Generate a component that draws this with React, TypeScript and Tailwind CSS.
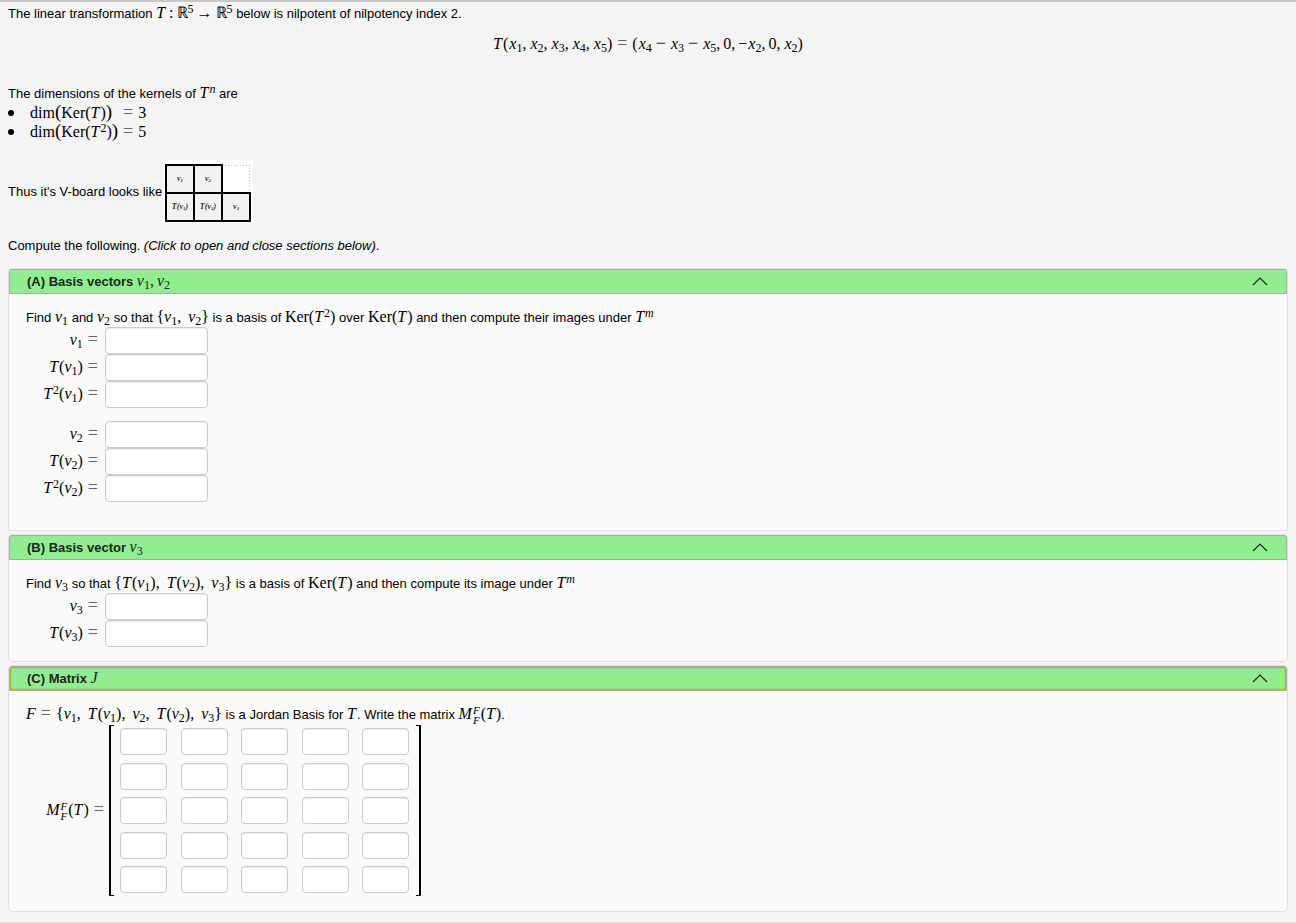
import React, { useState } from 'react'

interface Children {
  children: React.ReactNode
}

const M = ({ children }: Children) => (
  <span className="whitespace-nowrap font-['Liberation_Serif',serif] text-[16px] leading-[0] font-normal [&_sub]:-bottom-[3px] [&_sub]:text-[12px] [&_sup]:-top-[5px] [&_sup]:text-[12px]">
    {children}
  </span>
)

const Eq = () => <span className="mx-[5px] text-[18px] text-[#666]">=</span>
const EndEq = () => <span className="ml-[5px] text-[18px] text-[#666]">=</span>
const Op = () => <span className="mx-1 text-[18px] text-[#333]">−</span>
const Big = ({ children }: Children) => <span className="text-[19px]">{children}</span>
const T = () => <i className="mr-px">T</i>

// variable with a subscript, e.g. v_1
const V = ({ n }: { n: number }) => (
  <>
    <i>v</i>
    <sub>{n}</sub>
  </>
)

const X = ({ n }: { n: number }) => (
  <>
    <i className="ml-px">x</i>
    <sub>{n}</sub>
  </>
)

const Comma = () => <span className="mr-[3px]">,</span>
const WideComma = () => <span className="mr-[7px]">,</span>

const TV = ({ n }: { n: number }) => (
  <>
    <T />(<V n={n} />)
  </>
)

const T2V = ({ n }: { n: number }) => (
  <>
    <T />
    <sup>2</sup>(<V n={n} />)
  </>
)

const MatrixName = () => (
  <>
    <i>M</i>
    <span className="-my-1 mx-px inline-flex flex-col align-middle text-[11px] leading-[10px] italic">
      <span>F</span>
      <span>F</span>
    </span>
    (<T />)
  </>
)

const inputStyle =
  'h-[27px] rounded-[4px] border border-[#ccc] bg-white px-1 shadow-[inset_0_1px_1px_rgba(0,0,0,0.075)] outline-none focus:border-[#66afe9]'

const Answer = ({ id, children }: Children & { id: string }) => (
  <div className="flex items-center">
    <label htmlFor={id} className="w-[72px] text-right">
      <M>
        {children}
        <EndEq />
      </M>
    </label>
    <input id={id} type="text" className={`${inputStyle} ml-[7px] w-[103px]`} />
  </div>
)

interface SectionProps extends Children {
  title: React.ReactNode
  active?: boolean
  bottom: string
}

const Section = ({ title, active, bottom, children }: SectionProps) => {
  const [open, setOpen] = useState(true)
  return (
    <section className="mb-[3px] rounded-[4px] border border-[#e1e1e1] bg-[#fafafa]">
      <button
        type="button"
        aria-expanded={open}
        onClick={() => setOpen(!open)}
        className={`flex h-[25px] w-full items-center justify-between rounded-t-[3px] border border-[#aaa] bg-[#90ee90] pr-[18px] pl-[17px] text-left font-bold text-[#222] ${
          active ? 'shadow-[inset_0_0_0_1px_#a4be32,inset_0_0_2px_1px_#a4be32]' : ''
        }`}
      >
        <span>{title}</span>
        <svg width="16" height="9" viewBox="0 0 16 9" fill="none" stroke="#222" strokeWidth="1.2">
          <path d="M1 8 L8 1 L15 8" />
        </svg>
      </button>
      {open && <div className={`pt-[15px] pl-[17px] ${bottom}`}>{children}</div>}
    </section>
  )
}

const VBoard = () => (
  <svg
    width="90"
    height="63"
    viewBox="0 0 90 63"
    fontFamily="Liberation Serif, serif"
    fontSize="8"
    fontStyle="italic"
    fontWeight="bold"
    fill="#333"
    textAnchor="middle"
  >
    <rect width="90" height="63" fill="#fff" />
    <path d="M59 5.5H88M86.5 5V33" stroke="#bbb" strokeDasharray="1 2" />
    <path d="M3 5H59V33H87V61H3Z" fill="#f1f1f1" stroke="#000" strokeWidth="2" />
    <path d="M3 33H59V61M31 5V33M31 33V61" fill="none" stroke="#000" strokeWidth="2" />
    <text x="17" y="21">v<tspan fontSize="5" dy="1">1</tspan></text>
    <text x="45" y="21">v<tspan fontSize="5" dy="1">2</tspan></text>
    <text x="17" y="49">T(v<tspan fontSize="5" dy="1">1</tspan><tspan dy="-1">)</tspan></text>
    <text x="45" y="49">T(v<tspan fontSize="5" dy="1">2</tspan><tspan dy="-1">)</tspan></text>
    <text x="73" y="49">v<tspan fontSize="5" dy="1">3</tspan></text>
  </svg>
)

const cells = Array.from({ length: 25 }, (_, i) => i)

const App = () => {
  return (
    <div className="border-t-2 border-b border-t-[#c8c8c8] border-b-[#ddd] bg-[#f4f4f4] px-2 pt-[3px] pb-[7px] font-['Liberation_Sans',Arial,sans-serif] text-[13px] leading-[18px] text-black">
      <p>
        The linear transformation{' '}
        <M>
          <T />
          <span className="mx-[3px]">:</span>ℝ<sup>5</sup>
          <span className="mx-[3px]">→</span>ℝ<sup>5</sup>
        </M>{' '}
        below is nilpotent of nilpotency index 2.
      </p>

      <p className="mt-[13px] text-center">
        <M>
          <T />(<X n={1} />
          <Comma />
          <X n={2} />
          <Comma />
          <X n={3} />
          <Comma />
          <X n={4} />
          <Comma />
          <X n={5} />)<Eq />(<X n={4} />
          <Op />
          <X n={3} />
          <Op />
          <X n={5} />
          <Comma />0<Comma />−<X n={2} />
          <Comma />0<Comma />
          <X n={2} />)
        </M>
      </p>

      <p className="mt-[31px]">
        The dimensions of the kernels of{' '}
        <M>
          <T />
          <sup>
            <i>n</i>
          </sup>
        </M>{' '}
        are
      </p>
      <ul>
        <li className="flex h-[19px] items-center">
          <span className="mr-4 size-[6px] rounded-full bg-black" />
          <M>
            dim<Big>(</Big>Ker(
            <T />)<Big>)</Big>
            <span className="ml-[6px]">
              <Eq />
            </span>
            3
          </M>
        </li>
        <li className="flex h-[19px] items-center">
          <span className="mr-4 size-[6px] rounded-full bg-black" />
          <M>
            dim<Big>(</Big>Ker(
            <T />
            <sup>2</sup>)<Big>)</Big>
            <Eq />5
          </M>
        </li>
      </ul>

      <div className="mt-[19px] flex items-center">
        <span className="mr-px">Thus it's V-board looks like</span>
        <VBoard />
      </div>

      <p className="mt-[14px] mb-[13px]">
        Compute the following. <i>(Click to open and close sections below)</i>.
      </p>

      <Section
        bottom="pb-[28px]"
        title={
          <>
            (A) Basis vectors{' '}
            <M>
              <V n={1} />
              <Comma />
              <V n={2} />
            </M>
          </>
        }
      >
        <p>
          Find{' '}
          <M>
            <V n={1} />
          </M>{' '}
          and{' '}
          <M>
            <V n={2} />
          </M>{' '}
          so that{' '}
          <M>
            {'{'}
            <V n={1} />
            <WideComma />
            <V n={2} />
            {'}'}
          </M>{' '}
          is a basis of{' '}
          <M>
            Ker(
            <T />
            <sup>2</sup>)
          </M>{' '}
          over{' '}
          <M>
            Ker(
            <T />)
          </M>{' '}
          and then compute their images under{' '}
          <M>
            <T />
            <sup>
              <i>m</i>
            </sup>
          </M>
        </p>
        {[1, 2].map((n) => (
          <div key={n} className="mb-[13px] last:mb-0">
            <Answer id={`v${n}`}>
              <V n={n} />
            </Answer>
            <Answer id={`tv${n}`}>
              <TV n={n} />
            </Answer>
            <Answer id={`t2v${n}`}>
              <T2V n={n} />
            </Answer>
          </div>
        ))}
      </Section>

      <Section
        bottom="pb-[14px]"
        title={
          <>
            (B) Basis vector{' '}
            <M>
              <V n={3} />
            </M>
          </>
        }
      >
        <p>
          Find{' '}
          <M>
            <V n={3} />
          </M>{' '}
          so that{' '}
          <M>
            {'{'}
            <TV n={1} />
            <WideComma />
            <TV n={2} />
            <WideComma />
            <V n={3} />
            {'}'}
          </M>{' '}
          is a basis of{' '}
          <M>
            Ker(
            <T />)
          </M>{' '}
          and then compute its image under{' '}
          <M>
            <T />
            <sup>
              <i>m</i>
            </sup>
          </M>
        </p>
        <Answer id="v3">
          <V n={3} />
        </Answer>
        <Answer id="tv3">
          <TV n={3} />
        </Answer>
      </Section>

      <Section
        active
        bottom="pb-[15px]"
        title={
          <>
            (C) Matrix{' '}
            <M>
              <i>J</i>
            </M>
          </>
        }
      >
        <p className="mb-px">
          <M>
            <i>F</i>
            <Eq />
            {'{'}
            <V n={1} />
            <WideComma />
            <TV n={1} />
            <WideComma />
            <V n={2} />
            <WideComma />
            <TV n={2} />
            <WideComma />
            <V n={3} />
            {'}'}
          </M>{' '}
          is a Jordan Basis for{' '}
          <M>
            <T />
          </M>
          . Write the matrix{' '}
          <M>
            <MatrixName />
          </M>
          .
        </p>
        <div className="flex items-center">
          <span className="w-[78px] text-right">
            <M>
              <MatrixName />
              <EndEq />
            </M>
          </span>
          <div className="ml-[5px] flex h-[171px]">
            <span className="w-[5px] border-y border-l-2 border-black" />
            <div className="grid w-[302px] grid-cols-[repeat(5,47px)] content-between justify-between pt-[3px] pr-[7px] pb-[3px] pl-[6px]">
              {cells.map((i) => (
                <input
                  key={i}
                  type="text"
                  aria-label={`Row ${Math.floor(i / 5) + 1}, column ${(i % 5) + 1}`}
                  className={inputStyle}
                />
              ))}
            </div>
            <span className="w-[5px] border-y border-r-2 border-black" />
          </div>
        </div>
      </Section>
    </div>
  )
}

export default App
